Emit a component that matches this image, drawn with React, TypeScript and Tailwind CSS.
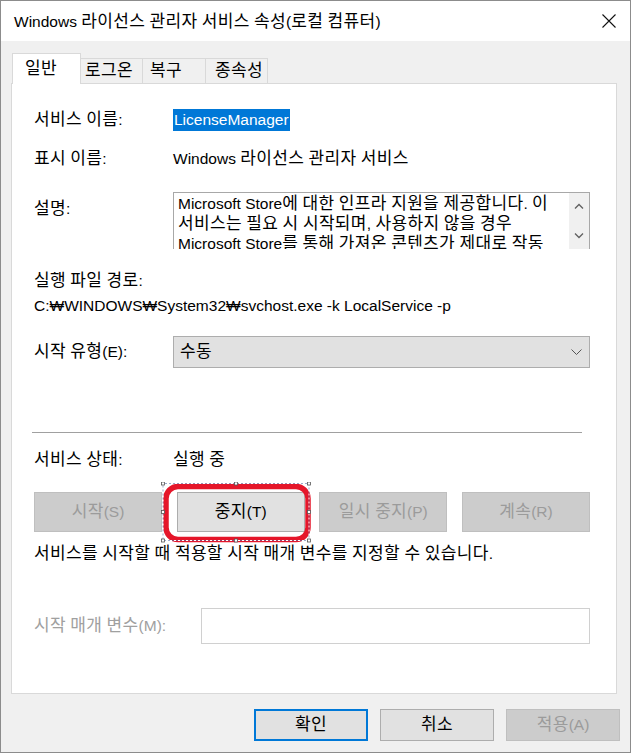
import React from "react";

const FONT = { fontFamily: "'Liberation Sans', 'Noto Sans CJK KR', sans-serif" };

function t(s: string): React.ReactNode {
  const parts = s.split(/([\uAC00-\uD7A3\u3131-\u318E]+)/);
  return (
    <span>
      {parts.map((p, i) =>
        i % 2 === 1 ? (
          <span key={i} className="text-[17px] tracking-[0.35px]">
            {p}
          </span>
        ) : (
          <React.Fragment key={i}>{p}</React.Fragment>
        )
      )}
    </span>
  );
}

function Chevron({ up = false }: { up?: boolean }) {
  return (
    <svg width="10" height="6" viewBox="0 0 10 6" className="block">
      {up ? (
        <path d="M1 5.5 L5 1.5 L9 5.5" fill="none" stroke="#606060" strokeWidth="1.3" />
      ) : (
        <path d="M1 0.5 L5 4.5 L9 0.5" fill="none" stroke="#606060" strokeWidth="1.3" />
      )}
    </svg>
  );
}

function Annotation() {
  const handles = [
    [2, 1.5],
    [75, 1.5],
    [148, 1.5],
    [2, 30],
    [148, 30],
    [2, 58.5],
    [75, 58.5],
    [148, 58.5],
  ];
  return (
    <svg
      className="absolute left-[127px] top-[-10px] pointer-events-none"
      width="152"
      height="62"
      viewBox="0 0 152 62"
    >
      <rect x="5" y="4.5" width="142" height="53" rx="12" fill="none" stroke="#e5162a" strokeWidth="5.5" />
      <rect x="2" y="1.5" width="146" height="57" fill="none" stroke="#ffffff" strokeWidth="1" strokeDasharray="2 2" />
      <rect x="2" y="1.5" width="146" height="57" fill="none" stroke="#5a6fa8" strokeWidth="0.6" strokeDasharray="2 2" strokeDashoffset="2" />
      {handles.map(([x, y], i) => (
        <rect key={i} x={x - 1.5} y={y - 1.5} width="3" height="3" fill="#ffffff" stroke="#555" strokeWidth="0.8" />
      ))}
    </svg>
  );
}

const disabledBtn =
  "w-[128px] h-[40px] bg-[#cccccc] border border-[#bfbfbf] text-[#9b9b9b] flex items-center justify-center";

export default function App() {
  return (
    <div style={FONT} className="w-[631px] h-[753px] border border-[#8c8c8c] bg-[#f0f0f0] flex flex-col text-[15.5px] text-black overflow-hidden">
      {/* Title bar */}
      <div className="h-[40px] bg-white flex items-center justify-between pl-[13px] pr-[14px] shrink-0">
        <span className="leading-none">{t("Windows 라이선스 관리자 서비스 속성(로컬 컴퓨터)")}</span>
        <svg width="14" height="14" viewBox="0 0 14 14">
          <path d="M0.5 0.5 L13.5 13.5 M13.5 0.5 L0.5 13.5" stroke="#111" strokeWidth="1.1" />
        </svg>
      </div>

      {/* Body */}
      <div className="flex-1 pl-[10px] pt-[12px] flex flex-col">
        {/* Tabs */}
        <div className="flex items-end h-[30px] pl-px">
          <div className="relative z-10 -mb-px h-[31px] w-[69px] bg-white border-l border-t border-r border-[#d9d9d9] flex items-center pl-[12px]">
            {t("일반")}
          </div>
          <div className="h-[25px] w-[62px] border-t border-r border-[#d9d9d9] flex items-center pl-[4px]">{t("로그온")}</div>
          <div className="h-[25px] w-[63px] border-t border-r border-[#d9d9d9] flex items-center pl-[7px]">{t("복구")}</div>
          <div className="h-[25px] w-[62px] border-t border-r border-[#d9d9d9] flex items-center pl-[9px]">{t("종속성")}</div>
        </div>

        {/* Panel */}
        <div className="w-[606px] h-[611px] bg-white border border-[#d9d9d9] pl-[22px] pr-[26px] flex flex-col">
          {/* 서비스 이름 */}
          <div className="mt-[25px] h-[22px] flex items-center">
            <span className="w-[139px] shrink-0">{t("서비스 이름:")}</span>
            <span className="h-[22px] px-px bg-[#0078d7] text-white flex items-center">LicenseManager</span>
          </div>
          {/* 표시 이름 */}
          <div className="mt-[17px] h-[22px] flex items-center">
            <span className="w-[139px] shrink-0">{t("표시 이름:")}</span>
            {t("Windows 라이선스 관리자 서비스")}
          </div>
          {/* 설명 */}
          <div className="mt-[22px] flex">
            <span className="w-[139px] shrink-0 mt-[6px] h-[22px] flex items-center">{t("설명:")}</span>
            <div className="flex-1 h-[57px] border-t border-l border-r border-[#a8a8a8] flex overflow-hidden">
              <div className="flex-1 pl-[4px] pt-px leading-[20px] overflow-hidden">
                <div className="whitespace-nowrap h-[20px]">{t("Microsoft Store에 대한 인프라 지원을 제공합니다. 이")}</div>
                <div className="whitespace-nowrap h-[20px]">{t("서비스는 필요 시 시작되며, 사용하지 않을 경우")}</div>
                <div className="whitespace-nowrap h-[20px]">{t("Microsoft Store를 통해 가져온 콘텐츠가 제대로 작동")}</div>
              </div>
              <div className="w-[20px] bg-[#f0f0f0] flex flex-col items-center justify-between pt-[10px] pb-[10px]">
                <Chevron up />
                <Chevron />
              </div>
            </div>
          </div>
          {/* 실행 파일 경로 */}
          <div className="mt-[21px] h-[22px] flex items-center">{t("실행 파일 경로:")}</div>
          <div className="mt-[3px] h-[22px] flex items-center">C:₩WINDOWS₩System32₩svchost.exe -k LocalService -p</div>
          {/* 시작 유형 */}
          <div className="mt-[19px] flex items-center">
            <span className="w-[139px] shrink-0">{t("시작 유형(E):")}</span>
            <div className="flex-1 h-[32px] bg-[#e1e1e1] border border-[#adadad] flex items-center justify-between pl-[6px] pr-[7px]">
              {t("수동")}
              <svg width="11" height="7" viewBox="0 0 11 7">
                <path d="M0.5 0.5 L5.5 5.5 L10.5 0.5" fill="none" stroke="#555" strokeWidth="1" />
              </svg>
            </div>
          </div>
          {/* separator */}
          <div className="mt-[64px] -ml-[2px] w-[550px] h-px bg-[#a0a0a0]" />
          {/* 서비스 상태 */}
          <div className="mt-[16px] h-[22px] flex items-center">
            <span className="w-[139px] shrink-0">{t("서비스 상태:")}</span>
            {t("실행 중")}
          </div>
          {/* buttons */}
          <div className="relative mt-[21px] h-[40px] flex justify-between">
            <div className={disabledBtn}>{t("시작(S)")}</div>
            <div className="w-[128px] h-[40px] bg-[#e1e1e1] border border-[#adadad] flex items-center justify-center">{t("중지(T)")}</div>
            <div className={disabledBtn}>{t("일시 중지(P)")}</div>
            <div className={disabledBtn}>{t("계속(R)")}</div>
            <Annotation />
          </div>
          {/* description */}
          <div className="mt-[11px] h-[22px] flex items-center whitespace-nowrap">{t("서비스를 시작할 때 적용할 시작 매개 변수를 지정할 수 있습니다.")}</div>
          {/* 시작 매개 변수 */}
          <div className="mt-[43px] flex items-center">
            <span className="w-[167px] shrink-0 text-[#a0a0a0]">{t("시작 매개 변수(M):")}</span>
            <div className="flex-1 h-[36px] bg-white border border-[#d0d0d0]" />
          </div>
        </div>

        {/* footer */}
        <div className="mt-[15px] flex justify-end gap-[12px] pr-[10px]">
          <div className="w-[114px] h-[32px] bg-[#e1e1e1] border-2 border-[#0078d7] flex items-center justify-center">{t("확인")}</div>
          <div className="w-[114px] h-[32px] bg-[#e1e1e1] border border-[#adadad] flex items-center justify-center">{t("취소")}</div>
          <div className="w-[114px] h-[32px] bg-[#cccccc] border border-[#bfbfbf] text-[#9b9b9b] flex items-center justify-center">{t("적용(A)")}</div>
        </div>
      </div>
    </div>
  );
}
